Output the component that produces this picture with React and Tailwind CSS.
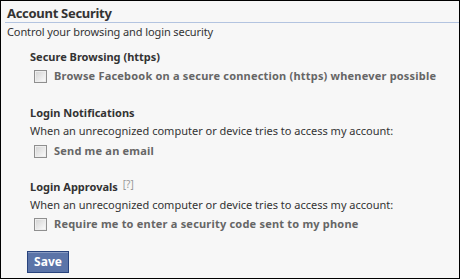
export default function App() {
  const font = { fontFamily: '"Noto Sans", "Liberation Sans", Arial, sans-serif' };
  const Checkbox = () => (
    <span className="inline-block w-[13px] h-[13px] border border-[#8f8f8f] bg-gradient-to-br from-[#d2d2d2] to-[#fdfdfd] shadow-[inset_0_0_0_1px_#eeeeee] shrink-0" />
  );
  return (
    <div className="w-[460px] h-[279px] border border-black bg-[#f7f7f7] text-[#333] text-[11px]" style={font}>
      <div className="ml-[4px] pl-[2px] pt-[4px] pb-[1px] border-b border-[#b3c4e0] text-[13px] font-bold leading-[16px] text-[#333] tracking-[-0.3px]">
        Account Security
      </div>
      <div className="ml-[6px] mt-[2px] leading-[14px] tracking-[-0.1px]">Control your browsing and login security</div>

      <div className="ml-[29px] mt-[11px] leading-[14px] font-bold text-[#333]">Secure Browsing (https)</div>
      <div className="ml-[33px] mt-[5px] flex items-center gap-[7px] leading-[14px] font-bold text-[#666] tracking-[0.2px]">
        <Checkbox />
        <span>Browse Facebook on a secure connection (https) whenever possible</span>
      </div>

      <div className="ml-[29px] mt-[23px] leading-[14px] font-bold text-[#333]">Login Notifications</div>
      <div className="ml-[29px] mt-[4px] leading-[14px]">When an unrecognized computer or device tries to access my account:</div>
      <div className="ml-[33px] mt-[6px] flex items-center gap-[7px] leading-[14px] font-bold text-[#666] tracking-[0.2px]">
        <Checkbox />
        <span>Send me an email</span>
      </div>

      <div className="ml-[29px] mt-[22px] leading-[14px] text-[#333] flex items-start">
        <span className="font-bold">Login Approvals</span>
        <span className="ml-[5px] text-[#999] text-[10px] leading-[10px] -mt-[1px]">[?]</span>
      </div>
      <div className="ml-[29px] mt-[4px] leading-[14px]">When an unrecognized computer or device tries to access my account:</div>
      <div className="ml-[33px] mt-[5px] flex items-center gap-[7px] leading-[14px] font-bold text-[#666] tracking-[0.2px]">
        <Checkbox />
        <span>Require me to enter a security code sent to my phone</span>
      </div>

      <div className="ml-[26px] mt-[20px]">
        <button className="h-[22px] w-[42px] border border-[#29447e] bg-[#5b74a8] shadow-[inset_0_1px_0_#8a9cc2] text-white font-bold text-[12px] leading-[18px]" style={font}>
          Save
        </button>
      </div>
    </div>
  );
}
